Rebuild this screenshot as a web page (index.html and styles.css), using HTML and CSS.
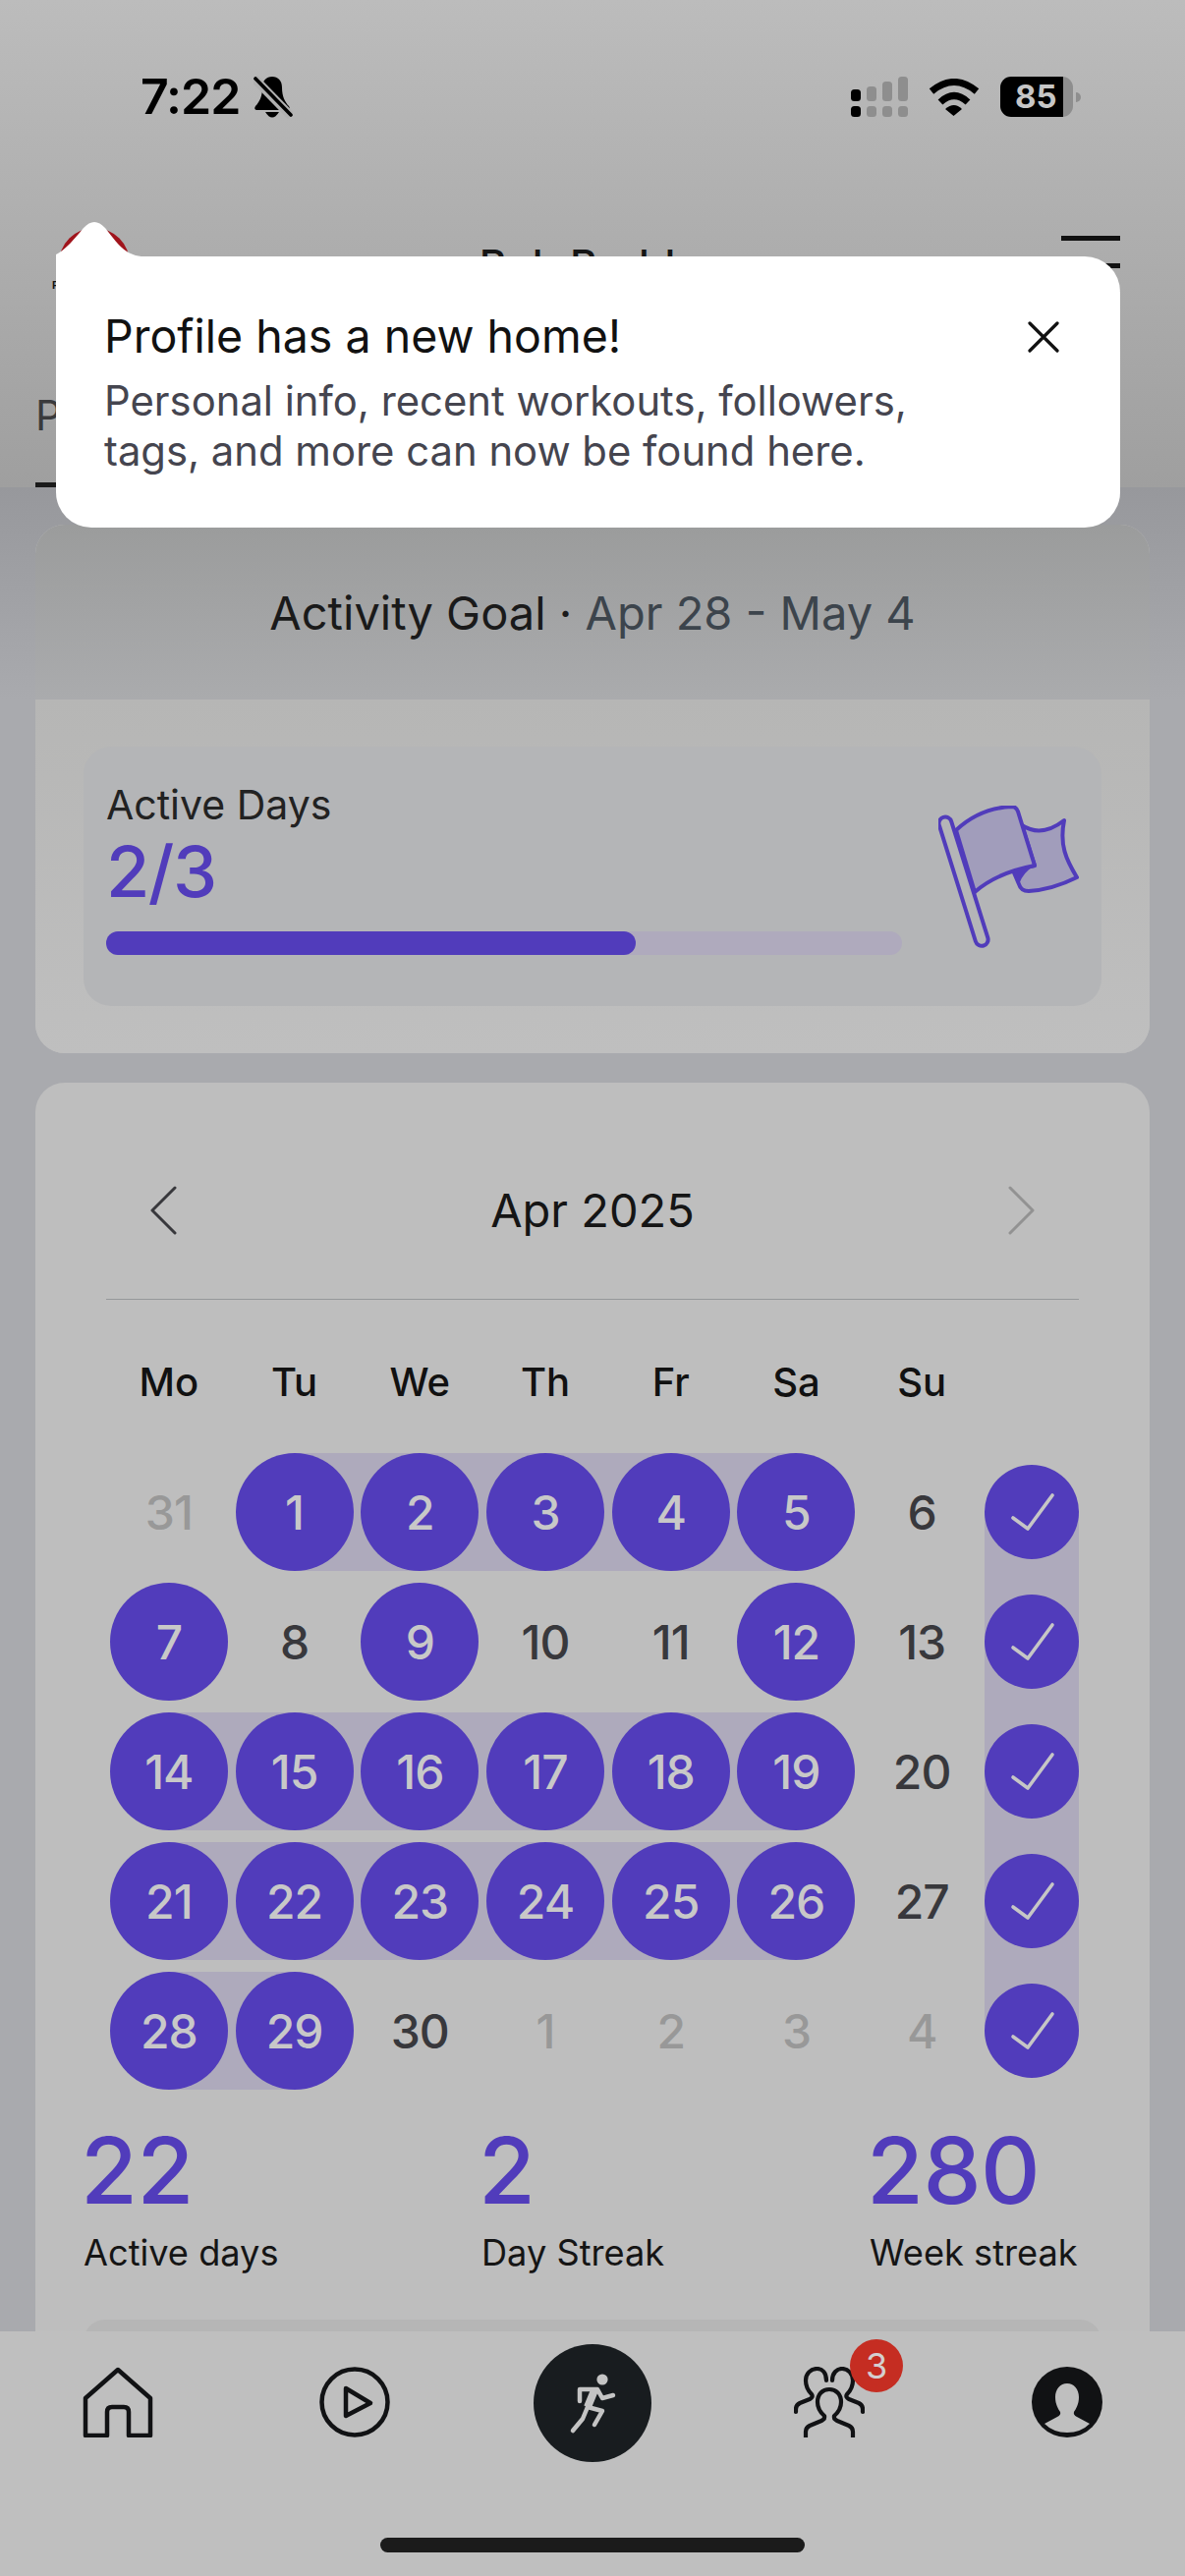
FILE: index.html
```html
<!DOCTYPE html>
<html lang="en">
<head>
  <meta charset="UTF-8" />
  <meta name="viewport" content="width=device-width, initial-scale=1.0" />
  <title>Activity - Profile</title>
  <link rel="stylesheet" href="styles.css">
</head>
<body>
  <header class="top">
    <div class="status">
      <div class="status-left">
        <span class="time">7:22</span>
        <svg class="bell" viewBox="0 0 40 44" width="40" height="44">
          <path d="M19 1C13 1 9 5 9 12C9 21 6 27 2 31Q0 34 3 35H35Q38 34 36 31C32 27 29 21 29 12C29 5 25 1 19 1Z" fill="#000"/>
          <path d="M12 37Q19 48 26 37Z" fill="#000"/>
          <path d="M0 2L38 41" stroke="#b0b0b0" stroke-width="9"/>
          <path d="M2 3L38 40" stroke="#000" stroke-width="3.6" stroke-linecap="round"/>
        </svg>
      </div>
      <div class="status-right">
        <svg class="signal" viewBox="0 0 58 41" width="58" height="41">
          <rect x="0" y="30" width="10" height="11" rx="3.5" fill="#000"/>
          <rect x="16" y="30" width="10" height="11" rx="3.5" fill="#8e8e8e"/>
          <rect x="32" y="30" width="10" height="11" rx="3.5" fill="#8e8e8e"/>
          <rect x="48" y="30" width="10" height="11" rx="3.5" fill="#8e8e8e"/>
          <rect x="0" y="13" width="10" height="12" rx="3.5" fill="#000"/>
          <rect x="16" y="10" width="10" height="15" rx="3.5" fill="#8e8e8e"/>
          <rect x="32" y="5" width="10" height="20" rx="3.5" fill="#8e8e8e"/>
          <rect x="48" y="0" width="10" height="25" rx="3.5" fill="#8e8e8e"/>
        </svg>
        <svg class="wifi" viewBox="0 0 52 38" width="52" height="38">
          <path d="M3 13Q26 -6 49 13" fill="none" stroke="#000" stroke-width="7"/>
          <path d="M12 24Q26 11 40 24" fill="none" stroke="#000" stroke-width="7"/>
          <path d="M17 31Q26 23 34 31L25.5 38Z" fill="#000"/>
        </svg>
        <div class="battery-wrap">
          <div class="battery">85</div>
          <div class="battery-nub"></div>
        </div>
      </div>
    </div>

    <div class="profile-row">
      <div class="avatar"><span class="avatar-tag">P</span></div>
      <div class="name">Bob Boddy</div>
      <div class="burger"><span></span><span></span><span></span></div>
    </div>

    <nav class="tabs">
      <a class="tab active">Profile</a>
    </nav>
  </header>

  <main class="content">
    <section class="card">
      <div class="goal-head">Activity Goal · <span class="goal-dates">Apr 28 - May 4</span></div>
      <div class="goal-body">
        <div class="goal-panel">
          <div class="goal-info">
            <div class="goal-label">Active Days</div>
            <div class="goal-count">2/3</div>
            <div class="progress"><div class="progress-fill" style="width: 66.5%"></div></div>
          </div>
          <svg class="flag" viewBox="0 0 143 145" width="143" height="145">
            <path d="M85 20Q105 33 128 15C123 40 130 55 141 73C125 81 108 86 92 87Q84 87 82 80L76 66L98 61Z" fill="#a19dbb" stroke="#513cbb" stroke-width="4" stroke-linejoin="round"/>
            <path d="M18 25C34 10 52 2 75 1Q79 1 81 6L98 61C77 65 55 72 37 88Z" fill="#a19dbb" stroke="#513cbb" stroke-width="4" stroke-linejoin="round"/>
            <path d="M76 66L98 61Q86 68 82 80Q79 74 76 66Z" fill="#513cbb"/>
            <rect x="-6.5" y="-6.5" width="13" height="137" rx="6.5" transform="translate(7 18) rotate(-17.4)" fill="none" stroke="#513cbb" stroke-width="4"/>
          </svg>
        </div>
      </div>
    </section>

    <section class="card">
      <div class="cal-nav">
        <svg class="chev" viewBox="0 0 28 50" width="28" height="50"><path d="M26 2L3 25L26 48" fill="none" stroke="#38383c" stroke-width="3" stroke-linecap="round" stroke-linejoin="round"/></svg>
        <div class="month">Apr 2025</div>
        <svg class="chev" viewBox="0 0 28 50" width="28" height="50"><path d="M2 2L25 25L2 48" fill="none" stroke="#929292" stroke-width="3" stroke-linecap="round" stroke-linejoin="round"/></svg>
      </div>

      <div class="cal-wrap">
        <div class="weekdays">
          <span>Mo</span><span>Tu</span><span>We</span><span>Th</span><span>Fr</span><span>Sa</span><span>Su</span>
        </div>
        <div class="cal-body">
          <div class="days">
            <div class="day muted">31</div>
            <div class="day band-start"><b>1</b></div>
            <div class="day band"><b>2</b></div>
            <div class="day band"><b>3</b></div>
            <div class="day band"><b>4</b></div>
            <div class="day band-end"><b>5</b></div>
            <div class="day">6</div>

            <div class="day"><b>7</b></div>
            <div class="day">8</div>
            <div class="day"><b>9</b></div>
            <div class="day">10</div>
            <div class="day">11</div>
            <div class="day"><b>12</b></div>
            <div class="day">13</div>

            <div class="day band-start"><b>14</b></div>
            <div class="day band"><b>15</b></div>
            <div class="day band"><b>16</b></div>
            <div class="day band"><b>17</b></div>
            <div class="day band"><b>18</b></div>
            <div class="day band-end"><b>19</b></div>
            <div class="day">20</div>

            <div class="day band-start"><b>21</b></div>
            <div class="day band"><b>22</b></div>
            <div class="day band"><b>23</b></div>
            <div class="day band"><b>24</b></div>
            <div class="day band"><b>25</b></div>
            <div class="day band-end"><b>26</b></div>
            <div class="day">27</div>

            <div class="day band-start"><b>28</b></div>
            <div class="day band-end"><b>29</b></div>
            <div class="day">30</div>
            <div class="day muted">1</div>
            <div class="day muted">2</div>
            <div class="day muted">3</div>
            <div class="day muted">4</div>
          </div>
          <div class="checks">
            <div class="check"><svg viewBox="0 0 96 96" width="96" height="96"><path d="M29 54L44 65L69 31" fill="none" stroke="#c6c6c6" stroke-width="3.6" stroke-linecap="round" stroke-linejoin="round"/></svg></div>
            <div class="check"><svg viewBox="0 0 96 96" width="96" height="96"><path d="M29 54L44 65L69 31" fill="none" stroke="#c6c6c6" stroke-width="3.6" stroke-linecap="round" stroke-linejoin="round"/></svg></div>
            <div class="check"><svg viewBox="0 0 96 96" width="96" height="96"><path d="M29 54L44 65L69 31" fill="none" stroke="#c6c6c6" stroke-width="3.6" stroke-linecap="round" stroke-linejoin="round"/></svg></div>
            <div class="check"><svg viewBox="0 0 96 96" width="96" height="96"><path d="M29 54L44 65L69 31" fill="none" stroke="#c6c6c6" stroke-width="3.6" stroke-linecap="round" stroke-linejoin="round"/></svg></div>
            <div class="check"><svg viewBox="0 0 96 96" width="96" height="96"><path d="M29 54L44 65L69 31" fill="none" stroke="#c6c6c6" stroke-width="3.6" stroke-linecap="round" stroke-linejoin="round"/></svg></div>
          </div>
        </div>
      </div>

      <div class="stats">
        <div class="stat"><div class="stat-num">22</div><div class="stat-label">Active days</div></div>
        <div class="stat"><div class="stat-num">2</div><div class="stat-label">Day Streak</div></div>
        <div class="stat"><div class="stat-num">280</div><div class="stat-label">Week streak</div></div>
      </div>
      <div class="next-panel"></div>
    </section>
  </main>

  <footer class="bottom-nav">
    <div class="nav-icons">
      <svg class="nav-icon" viewBox="0 0 72 72" width="72" height="72">
        <path d="M36 3L3 32V70H25V46Q25 41 30 41H42Q47 41 47 46V70H69V32Z" fill="none" stroke="#111214" stroke-width="4.5" stroke-linejoin="round"/>
      </svg>
      <svg class="nav-icon" viewBox="0 0 72 72" width="72" height="72">
        <circle cx="36" cy="36" r="33.5" fill="none" stroke="#111214" stroke-width="4.5"/>
        <path d="M27 22L52 37L27 50Z" fill="none" stroke="#111214" stroke-width="4.5" stroke-linejoin="round"/>
      </svg>
      <div class="run-btn">
        <svg viewBox="0 0 120 120" width="120" height="120">
          <circle cx="70" cy="36" r="5.6" fill="#c4c4c4"/>
          <path d="M47 58V46H65L70 55L81 52" fill="none" stroke="#c4c4c4" stroke-width="4.5" stroke-linecap="round" stroke-linejoin="round"/>
          <path d="M62 47L55 64" stroke="#c4c4c4" stroke-width="8"/>
          <path d="M55 64L50 76L40 88" fill="none" stroke="#c4c4c4" stroke-width="4.5" stroke-linecap="round" stroke-linejoin="round"/>
          <path d="M55 64L70 68L62 82" fill="none" stroke="#c4c4c4" stroke-width="4.5" stroke-linecap="round" stroke-linejoin="round"/>
        </svg>
      </div>
      <div class="people">
        <svg class="nav-icon" viewBox="0 0 72 72" width="72" height="72">
          <g fill="none" stroke="#111214" stroke-width="4.2" stroke-linecap="round" stroke-linejoin="round">
            <path d="M33 14C33 6 29 2 23.5 2C17 2 12 7 12 14Q12 22 18 28Q20 31 16 33L6 37Q2 39 2 43V46"/>
            <path d="M39 14C39 6 44 2 49 2C55 2 60 7 60 14Q60 22 54 28Q52 31 56 33L66 37Q70 39 70 43V46"/>
          </g>
          <path d="M12 72V66Q12 62 16 60L28 55Q32 53 31 50Q24 44 24 36C24 28 29 23 36 23C43 23 48 28 48 36Q48 44 41 50Q40 53 44 55L56 60Q60 62 60 66V72" fill="#bfbfbf" stroke="#111214" stroke-width="4.2" stroke-linejoin="round"/>
        </svg>
        <span class="badge">3</span>
      </div>
      <svg class="nav-icon" viewBox="0 0 72 72" width="72" height="72">
        <circle cx="36" cy="36" r="36" fill="#111214"/>
        <path d="M36 17C29 17 24 23 24 31C24 38 27 43 29 46Q30 49 26 51L13 58Q22 67 36 67Q50 67 59 58L46 51Q42 49 43 46C45 43 48 38 48 31C48 23 43 17 36 17Z" fill="#bfbfbf"/>
      </svg>
    </div>
    <div class="home-bar"></div>
  </footer>

  <!-- Tooltip over the profile header -->
  <div class="tip">
    <svg class="tip-arrow" viewBox="0 0 90 42" width="90" height="42"><path d="M0 36C8 32 14 26 28 9Q39 -3 50 9C62 24 70 38 90 38V42H0Z" fill="#fff"/></svg>
    <div class="tip-text">
      <h2>Profile has a new home!</h2>
      <p>Personal info, recent workouts, followers, tags, and more can now be found here.</p>
    </div>
    <svg class="tip-close" viewBox="0 0 32 32" width="32" height="32"><path d="M2 2L30 30M30 2L2 30" stroke="#111" stroke-width="3.2" stroke-linecap="round"/></svg>
  </div>
</body>
</html>
```

FILE: styles.css
```css
* {
  box-sizing: border-box;
}
html, body {
  margin: 0;
  padding: 0;
}
body {
  width: 1206px;
  height: 2622px;
  overflow: hidden;
  display: flex;
  flex-direction: column;
  font-family: Inter, "Liberation Sans", sans-serif;
  color: #151515;
  background-color: #a9aaae;
}

/* header */
.top {
  height: 496px;
  flex-shrink: 0;
  display: flex;
  flex-direction: column;
  background: linear-gradient(#bcbcbc 0, #9f9f9f 100%);
}
.status {
  display: flex;
  justify-content: space-between;
  align-items: center;
  height: 43px;
  margin-top: 77px;
  padding: 0 106px 0 143px;
}
.status-left {
  display: flex;
  align-items: center;
  gap: 14px;
}
.time {
  font-size: 50px;
  line-height: 43px;
  font-weight: 600;
  letter-spacing: -1px;
  color: #000;
}
.status-right {
  display: flex;
  align-items: center;
  gap: 21px;
}
.battery-wrap {
  display: flex;
  align-items: center;
  gap: 3px;
}
.battery {
  width: 74px;
  height: 41px;
  border-radius: 11px;
  background: linear-gradient(90deg, #000 64px, #8e8e8e 64px);
  color: #c6c6c6;
  font-size: 33px;
  font-weight: 700;
  line-height: 41px;
  padding-left: 15px;
}
.battery-nub {
  width: 5px;
  height: 10px;
  border-radius: 0 5px 5px 0;
  background-color: #8e8e8e;
}
.profile-row {
  display: grid;
  grid-template-columns: 1fr auto 1fr;
  margin-top: 112px;
  padding: 0 66px 0 60px;
}
.avatar {
  position: relative;
  width: 72px;
  height: 72px;
  border-radius: 50%;
  background-color: #a0141c;
}
.avatar-tag {
  position: absolute;
  left: -7px;
  top: 51px;
  font-size: 11px;
  font-weight: 700;
}
.name {
  margin-top: 11px;
  font-size: 43px;
  line-height: 53px;
  font-weight: 500;
}
.burger {
  justify-self: end;
  display: flex;
  flex-direction: column;
  gap: 23px;
  width: 60px;
  margin-top: 8px;
}
.burger span {
  height: 5px;
  background-color: #111;
}
.tabs {
  margin-top: auto;
  padding-left: 36px;
  display: flex;
}
.tab {
  font-size: 42px;
  line-height: 50px;
  color: #3a3a3c;
  padding-bottom: 43px;
  border-bottom: 5px solid #1a1a1a;
}

/* page content */
.content {
  flex: 1;
  min-height: 0;
  overflow: hidden;
  display: flex;
  flex-direction: column;
  gap: 30px;
  padding: 38px 36px 0;
  background: linear-gradient(#97989c 0, #a9aaae 216px);
}
.card {
  flex-shrink: 0;
  border-radius: 30px;
  overflow: hidden;
  background-color: #bebebe;
}
.goal-head {
  height: 178px;
  display: flex;
  align-items: center;
  justify-content: center;
  white-space: pre;
  font-size: 47px;
  background: linear-gradient(#9b9c9c, #aaabad);
  color: #1a1a1a;
}
.goal-dates {
  color: #3c444c;
}
.goal-body {
  padding: 48px 49px;
  background: linear-gradient(#b6b6b5, #bfbfbf);
}
.goal-panel {
  height: 264px;
  border-radius: 28px;
  padding: 36px 23px 0;
  display: flex;
  gap: 37px;
  background-color: #b4b5b7;
}
.goal-info {
  flex: 1;
}
.goal-label {
  font-size: 41px;
  line-height: 46px;
  color: #222;
}
.goal-count {
  margin-top: 5px;
  font-size: 72px;
  line-height: 80px;
  font-weight: 500;
  letter-spacing: -1.5px;
  color: #513cbb;
}
.progress {
  margin-top: 21px;
  height: 24px;
  border-radius: 12px;
  background-color: #afaabd;
}
.progress-fill {
  height: 100%;
  border-radius: 12px;
  background-color: #513cbb;
}
.flag {
  margin-top: 24px;
}

/* calendar */
.cal-nav {
  margin: 0 72px;
  padding: 105px 0 65px;
  border-bottom: 1.5px solid #96989a;
  display: flex;
  justify-content: space-between;
  align-items: center;
}
.chev {
  margin: 0 44px;
}
.month {
  font-size: 47px;
  line-height: 48px;
}
.cal-wrap {
  padding: 60px 72px 0;
}
.weekdays {
  width: 894px;
  display: grid;
  grid-template-columns: repeat(7, 1fr);
  margin-bottom: 48px;
  text-align: center;
  font-size: 40px;
  line-height: 48px;
  font-weight: 500;
  color: #111;
}
.cal-body {
  display: flex;
}
.days {
  width: 894px;
  display: grid;
  grid-template-columns: repeat(7, 1fr);
  grid-auto-rows: 120px;
  row-gap: 12px;
}
.day {
  display: flex;
  align-items: center;
  justify-content: center;
  font-size: 48px;
  font-weight: 500;
  letter-spacing: -1px;
  color: #38383c;
}
.day b {
  width: 120px;
  height: 120px;
  border-radius: 50%;
  display: flex;
  align-items: center;
  justify-content: center;
  font-weight: 500;
  background-color: #513cbb;
  color: #c8c8c8;
}
.muted {
  color: #989898;
}
.band {
  background-color: #aeaabc;
}
.band-start {
  background: linear-gradient(90deg, transparent 50%, #aeaabc 50%);
}
.band-end {
  background: linear-gradient(90deg, #aeaabc 50%, transparent 50%);
}
.checks {
  width: 96px;
  display: flex;
  flex-direction: column;
  gap: 36px;
  padding: 12px 0;
  background: linear-gradient(transparent 60px, #aeaabc 60px, #aeaabc calc(100% - 60px), transparent calc(100% - 60px));
}
.check {
  width: 96px;
  height: 96px;
  border-radius: 50%;
  background-color: #513cbb;
}
.check svg {
  display: block;
}
.stats {
  display: grid;
  grid-template-columns: 405px 395px 1fr;
  padding: 27px 49px 0;
}
.stat-num {
  margin-left: -3px;
  font-size: 94px;
  line-height: 110px;
  font-weight: 500;
  letter-spacing: -0.5px;
  color: #513cbb;
}
.stat-label {
  margin-top: 7px;
  font-size: 36.2px;
  line-height: 44px;
}
.next-panel {
  height: 120px;
  margin: 46px 49px 0;
  border-radius: 22px;
  background-color: #b6b6b6;
}

/* bottom nav */
.bottom-nav {
  height: 249px;
  flex-shrink: 0;
  background-color: #bfbfbf;
  display: flex;
  flex-direction: column;
  align-items: center;
}
.nav-icons {
  width: 100%;
  height: 210px;
  margin-left: -1px;
  padding-top: 13px;
  display: grid;
  grid-template-columns: repeat(5, 241.5px);
  justify-content: center;
  justify-items: center;
  align-items: start;
}
.nav-icon {
  display: block;
  margin-top: 23px;
}
.run-btn {
  width: 120px;
  height: 120px;
  border-radius: 50%;
  background-color: #181c1f;
}
.people {
  position: relative;
}
.badge {
  position: absolute;
  left: 57px;
  top: -5px;
  width: 54px;
  height: 54px;
  border-radius: 50%;
  display: flex;
  align-items: center;
  justify-content: center;
  background-color: #c52d22;
  color: #d4cfcf;
  font-size: 36px;
}
.home-bar {
  width: 432px;
  height: 15px;
  border-radius: 8px;
  background-color: #1b1b1b;
}

/* tooltip */
.tip {
  position: absolute;
  left: 57px;
  top: 261px;
  width: 1083px;
  height: 276px;
  border-radius: 36px;
  border-top-left-radius: 0;
  background-color: #fff;
  padding: 53px 62px 0 49px;
  display: flex;
  justify-content: space-between;
  align-items: flex-start;
}
.tip-arrow {
  position: absolute;
  left: 0;
  top: -38px;
}
.tip-text {
  width: 880px;
}
.tip-text h2 {
  margin: 0;
  font-size: 46.5px;
  line-height: 56px;
  font-weight: 400;
  color: #111;
}
.tip-text p {
  margin: 13px 0 0;
  font-size: 41.8px;
  line-height: 51px;
  color: #45454f;
}
.tip-close {
  margin-top: 13px;
}
```
